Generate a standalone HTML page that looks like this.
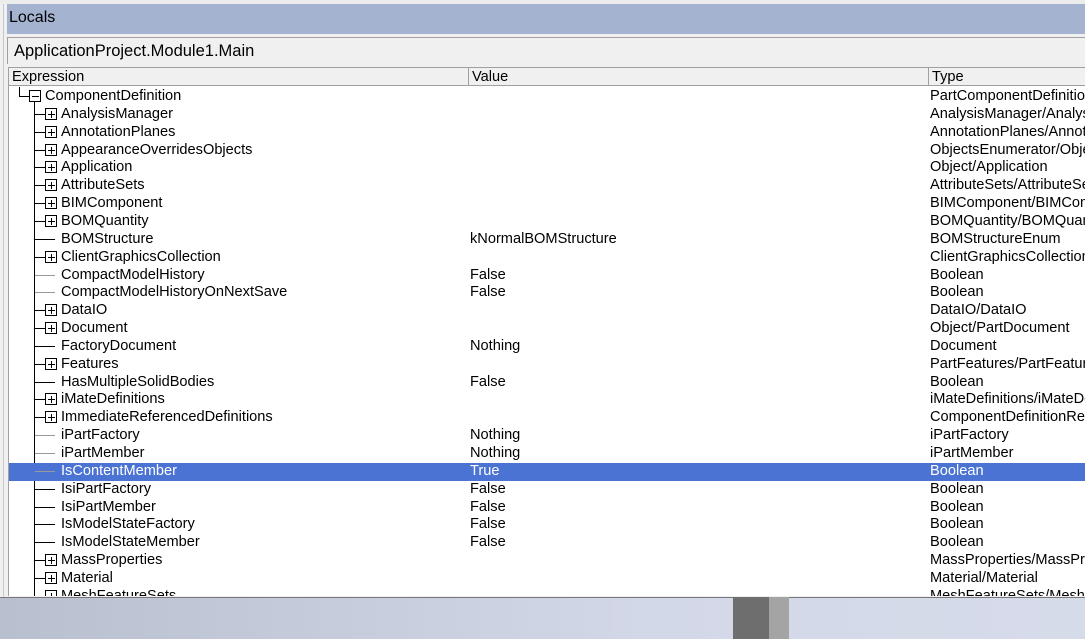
<!DOCTYPE html>
<html><head><meta charset="utf-8"><style>
*{margin:0;padding:0;box-sizing:border-box}
body{width:1085px;height:639px;overflow:hidden;background:#f0f0f0;font-family:"Liberation Sans",sans-serif;font-size:14.6px;color:#000;position:relative}
.abs{position:absolute}
#title{left:7px;top:4px;width:1078px;height:30px;background:#a4b3d0;font-size:16px;line-height:28px;padding-left:2px}
#scope{left:7px;top:37px;width:1078px;height:27px;background:#f0f0f0;border-top:1px solid #a0a0a0;border-left:1px solid #a0a0a0;font-size:16.5px;line-height:26px;padding-left:6px}
#grid{left:8px;top:67px;width:1077px;height:529px;background:#fff;border-left:1px solid #a0a0a0;border-top:1px solid #a0a0a0;overflow:hidden}
.hdr{position:absolute;top:0;height:18px;background:#f0f0f0;border-bottom:1px solid #a0a0a0;border-right:1px solid #a0a0a0;line-height:18px;padding-left:3px}
#rows{position:absolute;left:0;top:1.5px;width:1077px;height:600px}
.r{position:absolute;left:0;width:1077px;height:17.85px;line-height:17.85px}
.r span{position:absolute;white-space:nowrap}
.n{left:52px}.v{left:461px}.t{left:921px}
.sel{background:#4a73d4;color:#fff}
.bx{position:absolute;left:36px;top:2px;width:12px;height:12px;border:1px solid #000;background:#fff}
.bx:before{content:"";position:absolute;left:2px;top:5px;width:7px;height:1px;background:#000}
.bx:after{content:"";position:absolute;left:5px;top:2px;width:1px;height:7px;background:#000}
.bx.m:after{display:none}
.h{position:absolute;left:26px;top:8px;width:10px;height:1px;background:#000}
.lf{position:absolute;left:26px;top:8px;width:20px;height:1px;background:#000}
.g{background:#999}
#vl{left:25px;top:31px;width:1px;height:500px;background:#000}
#bottom{left:0;top:597px;width:1085px;height:42px;background:linear-gradient(90deg,#b8bfcf,#d3d8e8 60%,#d6dbea);border-top:1px solid #777}
</style></head><body>
<div class="abs" style="left:0;top:0;width:1085px;height:4px;background:#ececec"></div>
<div class="abs" style="left:3px;top:4px;width:1px;height:593px;background:#c8c8c8"></div>
<div id="title" class="abs">Locals</div>
<div id="scope" class="abs">ApplicationProject.Module1.Main</div>
<div id="grid" class="abs">
<div class="hdr" style="left:0;width:460px">Expression</div>
<div class="hdr" style="left:460px;width:460px">Value</div>
<div class="hdr" style="left:920px;width:160px">Type</div>
<div id="rows">
<div class="abs" style="left:10px;top:17px;width:1px;height:10px;background:#000"></div>
<div class="abs" style="left:10px;top:26px;width:10px;height:1px;background:#000"></div>
<div class="r" style="top:18.5px"><div class="bx m" style="left:20px"></div><span style="left:36px">ComponentDefinition</span><span class="t">PartComponentDefinition</span></div>
<div id="vl" class="abs"></div>
<div class="r" style="top:36.35px"><div class="h"></div><div class="bx"></div><span class="n">AnalysisManager</span><span class="t">AnalysisManager/AnalysisManager</span></div>
<div class="r" style="top:54.2px"><div class="h"></div><div class="bx"></div><span class="n">AnnotationPlanes</span><span class="t">AnnotationPlanes/AnnotationPlanes</span></div>
<div class="r" style="top:72.05px"><div class="h"></div><div class="bx"></div><span class="n">AppearanceOverridesObjects</span><span class="t">ObjectsEnumerator/ObjectsEnumerator</span></div>
<div class="r" style="top:89.9px"><div class="h"></div><div class="bx"></div><span class="n">Application</span><span class="t">Object/Application</span></div>
<div class="r" style="top:107.75px"><div class="h"></div><div class="bx"></div><span class="n">AttributeSets</span><span class="t">AttributeSets/AttributeSets</span></div>
<div class="r" style="top:125.6px"><div class="h"></div><div class="bx"></div><span class="n">BIMComponent</span><span class="t">BIMComponent/BIMComponent</span></div>
<div class="r" style="top:143.45px"><div class="h"></div><div class="bx"></div><span class="n">BOMQuantity</span><span class="t">BOMQuantity/BOMQuantity</span></div>
<div class="r" style="top:161.3px"><div class="lf"></div><span class="n">BOMStructure</span><span class="v">kNormalBOMStructure</span><span class="t">BOMStructureEnum</span></div>
<div class="r" style="top:179.15px"><div class="h"></div><div class="bx"></div><span class="n">ClientGraphicsCollection</span><span class="t">ClientGraphicsCollection</span></div>
<div class="r" style="top:197px"><div class="lf g"></div><span class="n">CompactModelHistory</span><span class="v">False</span><span class="t">Boolean</span></div>
<div class="r" style="top:214.85px"><div class="lf g"></div><span class="n">CompactModelHistoryOnNextSave</span><span class="v">False</span><span class="t">Boolean</span></div>
<div class="r" style="top:232.7px"><div class="h"></div><div class="bx"></div><span class="n">DataIO</span><span class="t">DataIO/DataIO</span></div>
<div class="r" style="top:250.55px"><div class="h"></div><div class="bx"></div><span class="n">Document</span><span class="t">Object/PartDocument</span></div>
<div class="r" style="top:268.4px"><div class="lf"></div><span class="n">FactoryDocument</span><span class="v">Nothing</span><span class="t">Document</span></div>
<div class="r" style="top:286.25px"><div class="h"></div><div class="bx"></div><span class="n">Features</span><span class="t">PartFeatures/PartFeatures</span></div>
<div class="r" style="top:304.1px"><div class="lf"></div><span class="n">HasMultipleSolidBodies</span><span class="v">False</span><span class="t">Boolean</span></div>
<div class="r" style="top:321.95px"><div class="h"></div><div class="bx"></div><span class="n">iMateDefinitions</span><span class="t">iMateDefinitions/iMateDefinitions</span></div>
<div class="r" style="top:339.8px"><div class="h"></div><div class="bx"></div><span class="n">ImmediateReferencedDefinitions</span><span class="t">ComponentDefinitionReferences</span></div>
<div class="r" style="top:357.65px"><div class="lf g"></div><span class="n">iPartFactory</span><span class="v">Nothing</span><span class="t">iPartFactory</span></div>
<div class="r" style="top:375.5px"><div class="lf g"></div><span class="n">iPartMember</span><span class="v">Nothing</span><span class="t">iPartMember</span></div>
<div class="r sel" style="top:393.35px"><div class="lf g"></div><span class="n">IsContentMember</span><span class="v">True</span><span class="t">Boolean</span></div>
<div class="r" style="top:411.2px"><div class="lf"></div><span class="n">IsiPartFactory</span><span class="v">False</span><span class="t">Boolean</span></div>
<div class="r" style="top:429.05px"><div class="lf"></div><span class="n">IsiPartMember</span><span class="v">False</span><span class="t">Boolean</span></div>
<div class="r" style="top:446.9px"><div class="lf"></div><span class="n">IsModelStateFactory</span><span class="v">False</span><span class="t">Boolean</span></div>
<div class="r" style="top:464.75px"><div class="lf"></div><span class="n">IsModelStateMember</span><span class="v">False</span><span class="t">Boolean</span></div>
<div class="r" style="top:482.6px"><div class="h"></div><div class="bx"></div><span class="n">MassProperties</span><span class="t">MassProperties/MassProperties</span></div>
<div class="r" style="top:500.45px"><div class="h"></div><div class="bx"></div><span class="n">Material</span><span class="t">Material/Material</span></div>
<div class="r" style="top:518.3px"><div class="h"></div><div class="bx"></div><span class="n">MeshFeatureSets</span><span class="t">MeshFeatureSets/MeshFeatureSets</span></div>
</div>
</div>
<div id="bottom" class="abs"></div>
<div class="abs" style="left:733px;top:597px;width:36px;height:42px;background:#6e6e6e"></div>
<div class="abs" style="left:769px;top:597px;width:20px;height:42px;background:#a4a4a4"></div>
</body></html>
